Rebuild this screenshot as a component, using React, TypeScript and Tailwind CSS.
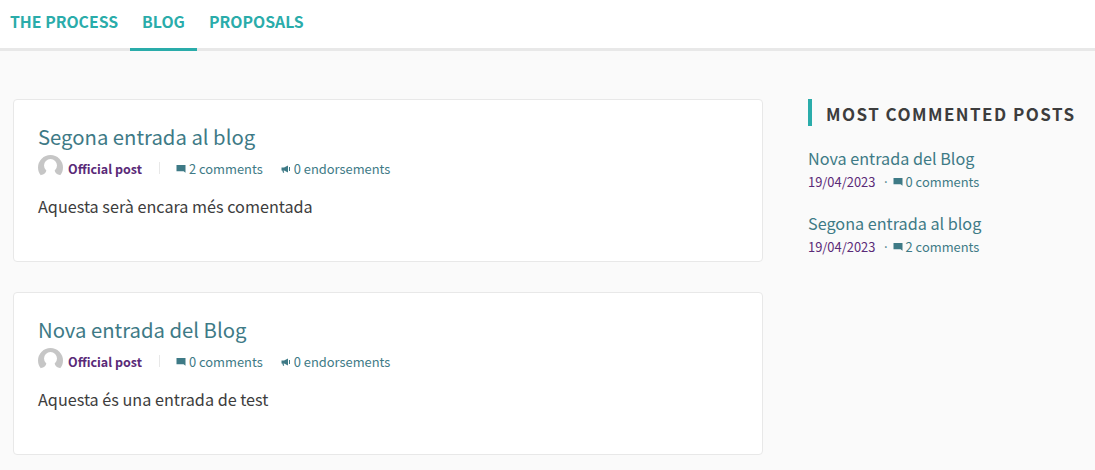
import React from 'react';

const font = { sans: 'font-["Noto_Sans_CJK_JP","Noto_Sans",sans-serif]' };

// 코멘트 아이콘
const CommentIcon = () => (
  <svg width="10" height="10" viewBox="0 0 10 10" className="mr-[3px] shrink-0" fill="#3e7a86">
    <path d="M0.5 1h9v7.8L7.6 7.2H0.5z" />
  </svg>
);

const MegaphoneIcon = () => (
  <svg width="10" height="10" viewBox="0 0 10 10" className="mr-[3px] shrink-0" fill="#3e7a86">
    <path d="M0.5 3.6h2.6L7 1.4v7.2L3.1 6.6H2.6l.6 2.2H2L1.3 6.4H.5zM8 3h1v4H8z" />
  </svg>
);

const Avatar = () => (
  <svg width="25" height="25" viewBox="0 0 25 25" className="shrink-0">
    <circle cx="12.5" cy="12.5" r="12.5" fill="#c6c6c6" />
    <ellipse cx="12.5" cy="10.5" rx="6.5" ry="6.5" fill="#fff" />
    <path d="M3 20C6 19.5 8 18 8.5 15h8c.5 3 2.5 4.5 5.5 5L25 25H0z" fill="#fff" />
  </svg>
);

const posts = [
  { title: 'Segona entrada al blog', comments: 2, body: 'Aquesta serà encara més comentada' },
  { title: 'Nova entrada del Blog', comments: 0, body: 'Aquesta és una entrada de test' },
];

const popular = [
  { title: 'Nova entrada del Blog', date: '19/04/2023', comments: 0 },
  { title: 'Segona entrada al blog', date: '19/04/2023', comments: 2 },
];

const App: React.FC = () => {
  return (
    <div className={`h-[470px] w-[1095px] overflow-hidden bg-[#fafafa] ${font.sans}`}>
      {/* 상단 탭 */}
      <nav className="flex h-[51px] border-b-[3px] border-[#e8e8e8] bg-white pl-[10px]">
        <a className="w-[120px] pt-[10px] text-[15.8px] font-semibold leading-[24px] whitespace-nowrap text-[#2aacaa]">THE PROCESS</a>
        <a className="-mb-[3px] h-[51px] w-[67px] border-b-[3px] border-[#2aacaa] pt-[10px] text-center text-[15.8px] font-semibold leading-[24px] text-[#2aacaa]">BLOG</a>
        <a className="pl-[12px] pt-[10px] text-[15.8px] font-semibold leading-[24px] text-[#2aacaa]">PROPOSALS</a>
      </nav>

      <div className="flex pl-[13px] pt-[48px]">
        {/* 글 목록 */}
        <main className="flex w-[750px] flex-col gap-[30px]">
          {posts.map((post) => (
            <article key={post.title} className="h-[163px] rounded-[4px] border border-[#e8e8e8] bg-white px-[24px] pt-[24px]">
              <h2 className="-mt-[2px] text-[20.3px] font-normal leading-[28px] text-[#3e7a86]">{post.title}</h2>
              <div className="mt-[5px] flex h-[25px] items-center text-[12.9px] leading-[20px]">
                <Avatar />
                <span className="ml-[5px] pt-[2px] text-[12.5px] font-bold text-[#5a2a78]">Official post</span>
                <span className="ml-[17px] h-[12px] w-px bg-[#e8e8e8]" />
                <span className="ml-[16px] flex items-center pt-[2px] text-[#3e7a86]">
                  <CommentIcon />
                  {post.comments} comments
                </span>
                <span className="ml-[18px] flex items-center pt-[2px] text-[#3e7a86]">
                  <MegaphoneIcon />
                  0 endorsements
                </span>
              </div>
              <p className="mt-[14px] text-[16.2px] leading-[24px] text-[#3d3d3d]">{post.body}</p>
            </article>
          ))}
        </main>

        {/* 사이드바 */}
        <aside className="ml-[45px] w-[280px]">
          <h3 className="h-[27px] border-l-[4px] border-[#2aacaa] pl-[14px] text-[17px] font-semibold leading-[29px] tracking-[1.45px] whitespace-nowrap text-[#3d3d3d]">
            MOST COMMENTED POSTS
          </h3>
          <div className="mt-[19px] flex flex-col gap-[18px]">
            {popular.map((item) => (
              <div key={item.title}>
                <div className="text-[16.2px] leading-[26px] text-[#3e7a86]">{item.title}</div>
                <div className="mt-[1px] flex items-center text-[12.9px] leading-[20px]">
                  <span className="text-[#5a2a78]">{item.date}</span>
                  <span className="ml-[7px] mr-[3px] text-[#3e7a86]">·</span>
                  <CommentIcon />
                  <span className="text-[#3e7a86]">{item.comments} comments</span>
                </div>
              </div>
            ))}
          </div>
        </aside>
      </div>
    </div>
  );
};

export default App;
